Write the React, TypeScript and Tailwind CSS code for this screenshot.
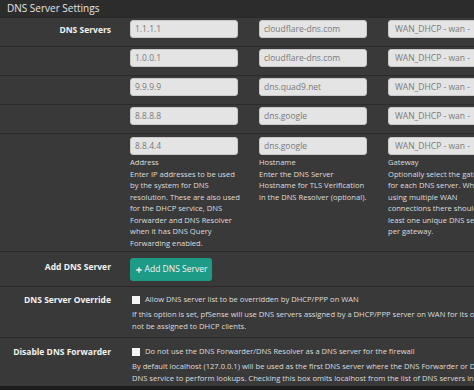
import { Plus } from "lucide-react";

type Server = { addr: string; host: string };

const servers: Server[] = [
  { addr: "1.1.1.1", host: "cloudflare-dns.com" },
  { addr: "1.0.0.1", host: "cloudflare-dns.com" },
  { addr: "9.9.9.9", host: "dns.quad9.net" },
  { addr: "8.8.8.8", host: "dns.google" },
  { addr: "8.8.4.4", host: "dns.google" },
];

function Field({ value }: { value: string }) {
  return (
    <div className="h-[18px] w-[108px] rounded-[3px] border border-[#c8c8c8] bg-[#e4e4e4] px-[4px] text-[8.5px] leading-[16px] text-[#7a7a7a] whitespace-nowrap overflow-hidden">
      {value}
    </div>
  );
}

function Label({ text }: { text: string }) {
  return (
    <div className="w-[111px] shrink-0 text-right text-[8.5px] font-bold text-[#f2f2f2]">
      {text}
    </div>
  );
}

export default function App() {
  return (
    <div
      className="h-[390px] w-[474px] overflow-hidden bg-[#1c1c1c]"
      style={{ fontFamily: '"Open Sans", "Noto Sans", sans-serif' }}
    >
      <div className="w-[620px] bg-[#393939]">
        <div className="h-[17px] bg-[#2c2c2c] pl-[7px] text-[10px] leading-[17px] text-[#e6e6e6]">
          DNS Server Settings
        </div>

        {servers.map((s, i) => {
          const last = i === servers.length - 1;
          return (
            <div
              key={i}
              className={`flex border-t border-[#2a2a2a] ${last ? "h-[118px] pt-[3px]" : "h-[29px] pt-[2px]"}`}
            >
              <div className="w-[111px] shrink-0 pt-[4px] text-right text-[8.5px] font-bold text-[#f2f2f2]">
                {i === 0 ? "DNS Servers" : ""}
              </div>
              <div className="ml-[19px] flex gap-[19px]">
                <div className="w-[110px]">
                  <Field value={s.addr} />
                  {last && (
                    <div className="mt-[2px] text-[7.6px] leading-[11.5px] text-[#dedede]">
                      <div>Address</div>
                      Enter IP addresses to be used by the system for DNS resolution. These are also used for the DHCP service, DNS Forwarder and DNS Resolver when it has DNS Query Forwarding enabled.
                    </div>
                  )}
                </div>
                <div className="w-[110px]">
                  <Field value={s.host} />
                  {last && (
                    <div className="mt-[2px] text-[7.6px] leading-[11.5px] text-[#dedede]">
                      <div>Hostname</div>
                      Enter the DNS Server Hostname for TLS Verification in the DNS Resolver (optional).
                    </div>
                  )}
                </div>
                <div className="w-[110px]">
                  <div className="h-[18px] w-[110px] rounded-[3px] border border-[#c8c8c8] bg-[#e4e4e4] px-[6px] text-[8.5px] leading-[16px] text-[#7a7a7a] whitespace-nowrap">
                    WAN_DHCP - wan -
                  </div>
                  {last && (
                    <div className="mt-[2px] text-[7.6px] leading-[11.5px] text-[#dedede]">
                      <div>Gateway</div>
                      Optionally select the gateway for each DNS server. When using multiple WAN connections there should be at least one unique DNS server per gateway.
                    </div>
                  )}
                </div>
              </div>
            </div>
          );
        })}

        <div className="flex h-[35px] border-t border-[#2a2a2a] pt-[6px]">
          <div className="w-[111px] shrink-0 pt-[3px]">
            <Label text="Add DNS Server" />
          </div>
          <div className="ml-[19px]">
            <button className="flex h-[23px] w-[82px] items-center justify-center gap-[2px] rounded-[3px] bg-[#1e9b86] text-[8.5px] text-[#f2f2f2]">
              <Plus className="h-[8px] w-[8px]" strokeWidth={4} />
              Add DNS Server
            </button>
          </div>
        </div>

        <div className="flex h-[51px] border-t border-[#2a2a2a] pt-[7px]">
          <Label text="DNS Server Override" />
          <div className="ml-[21px] whitespace-nowrap text-[7.6px] text-[#dedede]">
            <div className="flex items-center gap-[5px] leading-[11px]">
              <span className="inline-block h-[8px] w-[8px] bg-[#f4f4f4]" />
              <span>Allow DNS server list to be overridden by DHCP/PPP on WAN</span>
            </div>
            <div className="mt-[3px] leading-[12px]">
              If this option is set, pfSense will use DNS servers assigned by a DHCP/PPP server on WAN for its own purposes (including the DNS Forwarder/DNS Resolver). However, they will
              <br />
              not be assigned to DHCP clients.
            </div>
          </div>
        </div>

        <div className="flex h-[49px] border-t border-[#2a2a2a] pt-[8px]">
          <Label text="Disable DNS Forwarder" />
          <div className="ml-[21px] whitespace-nowrap text-[7.6px] text-[#dedede]">
            <div className="flex items-center gap-[5px] leading-[11px]">
              <span className="inline-block h-[8px] w-[8px] bg-[#f4f4f4]" />
              <span>Do not use the DNS Forwarder/DNS Resolver as a DNS server for the firewall</span>
            </div>
            <div className="mt-[3px] leading-[12px]">
              By default localhost (127.0.0.1) will be used as the first DNS server where the DNS Forwarder or DNS Resolver is enabled and set to listen on localhost, so system can use the local
              <br />
              DNS service to perform lookups. Checking this box omits localhost from the list of DNS servers in resolv.conf.
            </div>
          </div>
        </div>
      </div>
    </div>
  );
}
